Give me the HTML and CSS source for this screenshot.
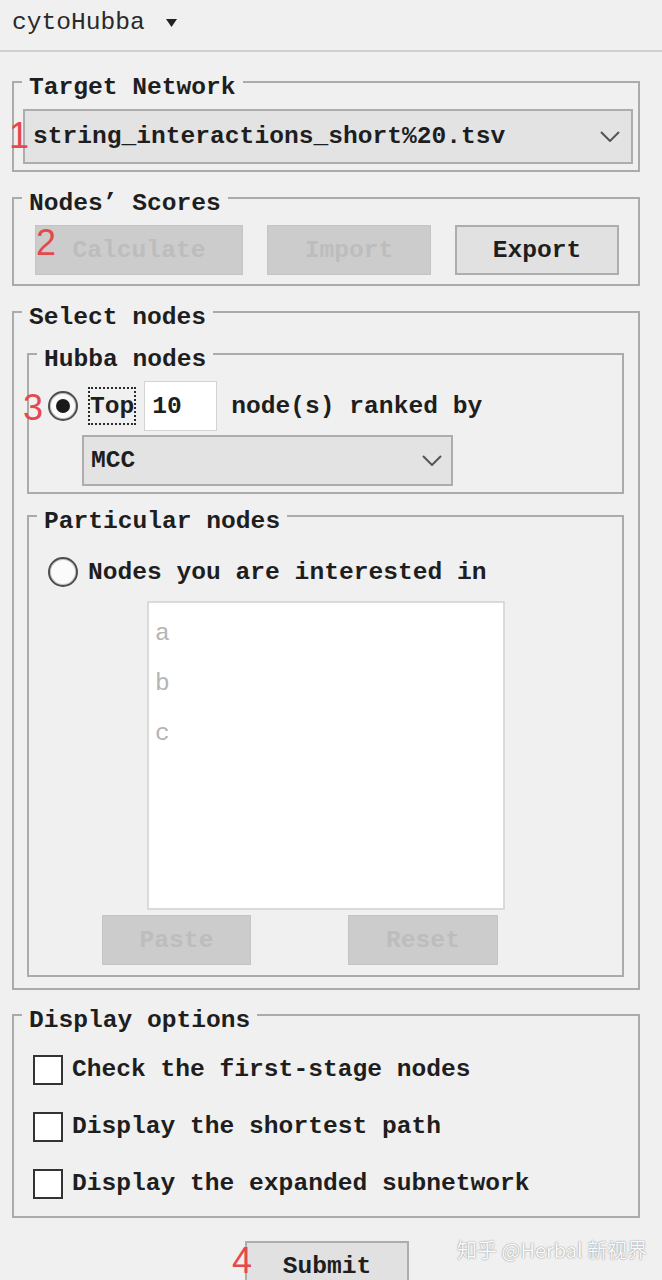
FILE: index.html
```html
<!DOCTYPE html>
<html lang="en">
<head>
<meta charset="utf-8">
<title>cytoHubba</title>
<link rel="stylesheet" href="styles.css">
</head>
<body>
<header class="topbar">
  <span class="app-title">cytoHubba</span>
  <svg class="caret" width="11" height="8" viewBox="0 0 11 8"><polygon points="0,0 11,0 5.5,8" fill="#222"/></svg>
</header>
<main class="panel">
  <fieldset class="group group-target">
    <legend>Target Network</legend>
    <div class="combo combo-target">
      <span class="mark mark-1">1</span>
      <span class="combo-text">string_interactions_short%20.tsv</span>
      <svg class="chevron" width="20" height="11" viewBox="0 0 20 11"><polyline points="1,1 10,10 19,1" fill="none" stroke="#555" stroke-width="2"/></svg>
    </div>
  </fieldset>

  <fieldset class="group">
    <legend>Nodes’ Scores</legend>
    <div class="btn-row">
      <button class="btn btn-disabled btn-calc" type="button"><span class="mark mark-2">2</span>Calculate</button>
      <button class="btn btn-disabled btn-import" type="button">Import</button>
      <button class="btn btn-normal btn-export" type="button">Export</button>
    </div>
  </fieldset>

  <fieldset class="group">
    <legend>Select nodes</legend>
    <div class="select-body">
      <fieldset class="group group-inner group-hubba">
        <legend>Hubba nodes</legend>
        <div class="hubba-body">
          <div class="rank-row">
            <span class="mark mark-3">3</span>
            <span class="radio radio-on"><span class="radio-dot"></span></span>
            <span class="focus-label">Top</span>
            <input class="num-input" type="text" value="10">
            <span class="rank-text">node(s) ranked by</span>
          </div>
          <div class="combo combo-mcc">
            <span class="combo-text">MCC</span>
            <svg class="chevron" width="20" height="11" viewBox="0 0 20 11"><polyline points="1,1 10,10 19,1" fill="none" stroke="#555" stroke-width="2"/></svg>
          </div>
        </div>
      </fieldset>
      <fieldset class="group group-inner group-particular">
        <legend>Particular nodes</legend>
        <div class="particular-body">
          <div class="choice-row">
            <span class="radio"></span>
            <span class="choice-text">Nodes you are interested in</span>
          </div>
          <div class="node-list">
            <div class="ph">a</div>
            <div class="ph">b</div>
            <div class="ph">c</div>
          </div>
          <div class="list-actions">
            <button class="btn btn-disabled btn-paste" type="button">Paste</button>
            <button class="btn btn-disabled btn-reset" type="button">Reset</button>
          </div>
        </div>
      </fieldset>
    </div>
  </fieldset>

  <fieldset class="group group-display">
    <legend>Display options</legend>
    <div class="display-body">
      <div class="check-row"><span class="checkbox"></span><span class="check-text">Check the first-stage nodes</span></div>
      <div class="check-row"><span class="checkbox"></span><span class="check-text">Display the shortest path</span></div>
      <div class="check-row"><span class="checkbox"></span><span class="check-text">Display the expanded subnetwork</span></div>
    </div>
  </fieldset>

  <div class="footer">
    <button class="btn btn-normal btn-submit" type="button"><span class="mark mark-4">4</span>Submit</button>
    <span class="watermark">知乎 @Herbal 新视界</span>
  </div>
</main>
</body>
</html>
```

FILE: styles.css
```css
html, body {
  margin: 0;
  padding: 0;
  background: #f0f0f0;
}

body {
  font-family: "Liberation Mono", "DejaVu Sans Mono", monospace;
  font-size: 24.6px;
  color: #1e1e1e;
  overflow: hidden;
  height: 1280px;
}

.topbar {
  height: 52px;
  box-sizing: border-box;
  border-bottom: 2px solid #cfcfcf;
  display: flex;
  align-items: flex-start;
  padding: 10px 0 0 12px;
  line-height: 26px;
}

.app-title {
  color: #2a2a2a;
}

.caret {
  margin: 9px 0 0 21px;
}

.panel {
  padding: 10px 22px 0 12px;
}

.group {
  margin: 6px 0 0;
  padding: 0;
  border: 2px solid #ababab;
  min-width: 0;
}

.panel > .group:first-child {
  margin-top: 0;
}

.group > legend {
  margin-left: 8px;
  padding: 12px 7px 0;
  line-height: 28px;
  font-weight: bold;
}

/* combo boxes */
.combo {
  position: relative;
  display: flex;
  align-items: center;
  justify-content: space-between;
  box-sizing: border-box;
  background: #e3e3e3;
  border: 2px solid #adadad;
  font-weight: bold;
}

.combo-target {
  height: 55px;
  margin: 7px 5px 6px 9px;
  padding: 0 11px 0 8px;
}

.combo-mcc {
  width: 371px;
  height: 51px;
  margin: 4px 0 0 53px;
  padding: 0 9px 0 7px;
}

.chevron {
  display: block;
}

/* buttons */
.btn {
  position: relative;
  flex: none;
  height: 50px;
  box-sizing: border-box;
  font-family: inherit;
  font-size: inherit;
  font-weight: bold;
  padding: 0;
  display: flex;
  align-items: center;
  justify-content: center;
  border-radius: 0;
}

.btn-disabled {
  background: #cccccc;
  border: 1px solid #c4c4c4;
  color: #bdbdbd;
}

.btn-normal {
  background: #e1e1e1;
  border: 2px solid #adadad;
  color: #1e1e1e;
}

.btn-row {
  display: flex;
  gap: 24px;
  margin: 7px 0 9px 21px;
}

.btn-calc { width: 208px; }
.btn-import { width: 164px; }
.btn-export { width: 164px; }

/* select nodes */
.select-body {
  padding: 0 14px 11px 13px;
}

.group-hubba {
  margin-top: 2px;
}

.group-particular {
  margin-top: 2px;
}

.hubba-body {
  padding: 7px 0 6px 0;
}

.rank-row {
  position: relative;
  display: flex;
  align-items: center;
  height: 50px;
  padding-left: 19px;
  font-weight: bold;
}

.radio {
  width: 30px;
  height: 30px;
  box-sizing: border-box;
  border-radius: 50%;
  border: 2px solid #4d4d4d;
  background: #fbfbfb;
  box-shadow: inset 0 0 0 1px #c8c8c8;
  display: flex;
  align-items: center;
  justify-content: center;
  flex: none;
}

.radio-dot {
  width: 14px;
  height: 14px;
  border-radius: 50%;
  background: #1a1a1a;
}

.focus-label {
  margin-left: 10px;
  height: 38px;
  box-sizing: border-box;
  border: 2px dotted #2a2a2a;
  display: flex;
  align-items: center;
}

.num-input {
  width: 73px;
  height: 50px;
  box-sizing: border-box;
  margin: 0 0 0 8px;
  padding: 0 0 0 7px;
  background: #ffffff;
  border: 1px solid #d3d3d3;
  font-family: inherit;
  font-size: inherit;
  font-weight: bold;
  color: #1e1e1e;
  outline: none;
}

.rank-text {
  margin-left: 14px;
}

.particular-body {
  padding: 11px 0 10px 0;
}

.choice-row {
  display: flex;
  align-items: center;
  height: 50px;
  padding-left: 19px;
  font-weight: bold;
}

.choice-text {
  margin-left: 10px;
}

.node-list {
  margin: 4px 0 0 118px;
  width: 358px;
  height: 309px;
  box-sizing: border-box;
  background: #ffffff;
  border: 2px solid #dadada;
  padding: 6px 0 0 6px;
  color: #b5b5b5;
  line-height: 50px;
}

.list-actions {
  display: flex;
  gap: 97px;
  margin: 5px 0 0 73px;
}

.btn-paste { width: 149px; }
.btn-reset { width: 150px; }

/* display options */
.group-display {
  margin-top: 5px;
}

.display-body {
  padding: 6px 0 4px 19px;
}

.check-row {
  display: flex;
  align-items: center;
  height: 57px;
  font-weight: bold;
}

.checkbox {
  width: 30px;
  height: 30px;
  box-sizing: border-box;
  border: 2px solid #333333;
  background: #ffffff;
  flex: none;
}

.check-text {
  margin-left: 9px;
}

/* footer */
.footer {
  display: flex;
  align-items: flex-start;
  margin-top: 23px;
  padding-left: 233px;
}

.btn-submit {
  width: 164px;
}

.watermark {
  flex: none;
  margin: -3px 0 0 48px;
  font-family: "Noto Sans CJK SC", "Noto Sans", sans-serif;
  font-size: 20px;
  line-height: 24px;
  color: #fafafa;
  text-shadow: 0 0 1.5px rgba(0, 0, 0, 0.55);
  white-space: nowrap;
}

/* red annotation numbers */
.mark {
  position: absolute;
  font-family: "Liberation Sans", sans-serif;
  font-weight: normal;
  font-size: 36px;
  line-height: 36px;
  color: #e5484d;
}

.mark-1 { left: -16px; top: 7px; }
.mark-2 { left: 0; top: -1px; }
.mark-3 { left: -6px; top: 9px; }
.mark-4 { left: -15px; top: 0; }
```
